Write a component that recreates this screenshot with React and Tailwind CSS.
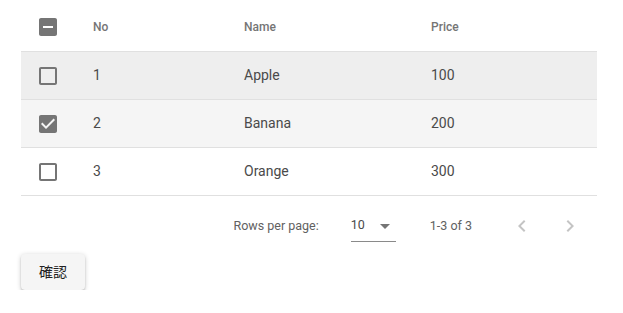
import { useState } from "react";

const rows = [
  { no: 1, name: "Apple", price: 100 },
  { no: 2, name: "Banana", price: 200 },
  { no: 3, name: "Orange", price: 300 },
];

const paths = {
  blank:
    "M19 5v14H5V5h14m0-2H5c-1.11 0-2 .9-2 2v14c0 1.1.89 2 2 2h14c1.1 0 2-.9 2-2V5c0-1.1-.9-2-2-2z",
  checked:
    "M19 3H5c-1.11 0-2 .9-2 2v14c0 1.1.89 2 2 2h14c1.11 0 2-.9 2-2V5c0-1.1-.89-2-2-2zm-9 14l-5-5 1.41-1.41L10 14.17l7.59-7.59L19 8l-9 9z",
  some: "M19 3H5c-1.1 0-2 .9-2 2v14c0 1.1.9 2 2 2h14c1.1 0 2-.9 2-2V5c0-1.1-.9-2-2-2zm-2 10H7v-2h10v2z",
};

function Box({ state }) {
  return (
    <svg viewBox="0 0 24 24" className="h-6 w-6 fill-[#757575]">
      <path d={paths[state]} />
    </svg>
  );
}

const cols = "grid grid-cols-[72px_151px_187px_1fr] items-center";

export default function App() {
  const [selected] = useState([2]);

  return (
    <div className="bg-white" style={{ fontFamily: "Roboto, 'Noto Sans CJK JP', sans-serif" }}>
      <div className="ml-[21px] w-[576px]">
        <div className={`${cols} h-[52px] border-b border-[#e0e0e0] pt-[2px] text-[12px] font-medium text-[#757575]`}>
          <div className="pl-[15px]">
            <Box state="some" />
          </div>
          <div>No</div>
          <div>Name</div>
          <div>Price</div>
        </div>
        {rows.map((r, i) => {
          const on = selected.includes(r.no);
          const bg = i === 0 ? "bg-[#eeeeee]" : on ? "bg-[#f5f5f5]" : "bg-white";
          return (
            <div
              key={r.no}
              className={`${cols} h-[48px] border-b border-[#e0e0e0] text-[14px] text-[#4a4a4a] ${bg}`}
            >
              <div className="pl-[15px]">
                <Box state={on ? "checked" : "blank"} />
              </div>
              <div>{r.no}</div>
              <div>{r.name}</div>
              <div>{r.price}</div>
            </div>
          );
        })}
        <div className="flex h-[58px] items-center justify-end pr-[3px] pt-[2px] text-[12.5px] text-[#616161]">
          <span>Rows per page:</span>
          <div className="relative ml-[32px] flex h-[32px] w-[45px] items-center border-b border-[#8a8a8a] text-[12.5px] text-[#4a4a4a]">
            <span>10</span>
            <svg viewBox="0 0 24 24" className="absolute right-[-1px] top-[4px] h-6 w-6 fill-[#757575]">
              <path d="M7 10l5 5 5-5z" />
            </svg>
          </div>
          <span className="ml-[34px]">1-3 of 3</span>
          <div className="ml-[26px] flex">
            <button className="flex h-[48px] w-[48px] items-center justify-center">
              <svg viewBox="0 0 24 24" className="h-6 w-6 fill-[#c4c4c4]">
                <path d="M15.41 7.41L14 6l-6 6 6 6 1.41-1.41L10.83 12z" />
              </svg>
            </button>
            <button className="flex h-[48px] w-[48px] items-center justify-center">
              <svg viewBox="0 0 24 24" className="h-6 w-6 fill-[#c4c4c4]">
                <path d="M10 6L8.59 7.41 13.17 12l-4.58 4.59L10 18l6-6z" />
              </svg>
            </button>
          </div>
        </div>
        <button className="h-[36px] min-w-[64px] rounded-[4px] bg-[#f5f5f5] px-4 text-[14px] text-[#212121] shadow-[0_1px_5px_0_rgba(0,0,0,0.2),0_2px_2px_0_rgba(0,0,0,0.14),0_3px_1px_-2px_rgba(0,0,0,0.12)]">
          確認
        </button>
      </div>
    </div>
  );
}
